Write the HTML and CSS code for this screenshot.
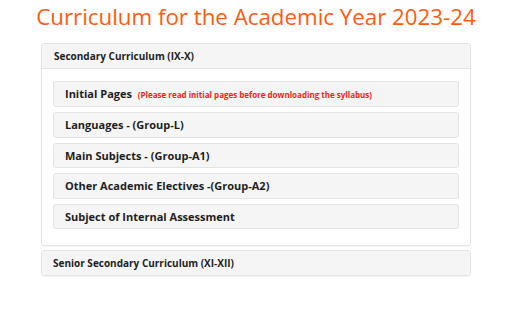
FILE: index.html
```html
<!DOCTYPE html>
<html lang="en">

<head>
    <meta charset="UTF-8">
    <meta name="viewport" content="width=device-width, initial-scale=1.0">
    <title>Curriculum</title>
    <link rel="stylesheet" href="styles.css">
</head>

<body>
    <div id="root">
        <h1>Curriculum for the Academic Year 2023-24</h1>
        <div class="panel">
            <div class="panel-heading">Secondary Curriculum (IX-X)</div>
            <div class="panel-body">
                <div class="item">Initial Pages <span class="note">(Please read initial pages before downloading the syllabus)</span></div>
                <div class="item">Languages - (Group-L)</div>
                <div class="item">Main Subjects - (Group-A1)</div>
                <div class="item">Other Academic Electives -(Group-A2)</div>
                <div class="item">Subject of Internal Assessment</div>
            </div>
        </div>
        <div class="panel">
            <div class="panel-heading">Senior Secondary Curriculum (XI-XII)</div>
        </div>
    </div>
</body>

</html>
```

FILE: styles.css
```css
* {
    margin: 0;
    padding: 0;
    box-sizing: border-box;
}

body {
    font-family: "Open Sans", "Liberation Sans", sans-serif;
    color: #1e1e1e;
    background: #fff;
}

#root {
    padding: 0 41px;
}

h1 {
    font-size: 22.3px;
    font-weight: 500;
    color: #ff5a0f;
    text-align: center;
    line-height: 32px;
    margin: 1px -20px 10px;
    white-space: nowrap;
}

.panel {
    border: 1px solid #e3e3e3;
    border-radius: 3px;
    margin-bottom: 4px;
    box-shadow: 0 1px 1px rgba(0, 0, 0, .05);
}

.panel-heading {
    background: #f5f5f5;
    border-bottom: 1px solid #e3e3e3;
    font-size: 10px;
    font-weight: 700;
    line-height: 24px;
    padding: 0 12px;
}

.panel:last-child .panel-heading {
    border-bottom: none;
    padding: 0 11px;
}

.panel-body {
    padding: 12px 11px 16px;
    display: flex;
    flex-direction: column;
    gap: 5px;
}

.item {
    background: #f5f5f5;
    border: 1px solid #e3e3e3;
    border-radius: 3px;
    font-size: 11px;
    font-weight: 700;
    line-height: 23.4px;
    padding: 0 11px;
}

.note {
    color: #ff1a1a;
    font-size: 8px;
    font-weight: 700;
    margin-left: 3px;
}
```
